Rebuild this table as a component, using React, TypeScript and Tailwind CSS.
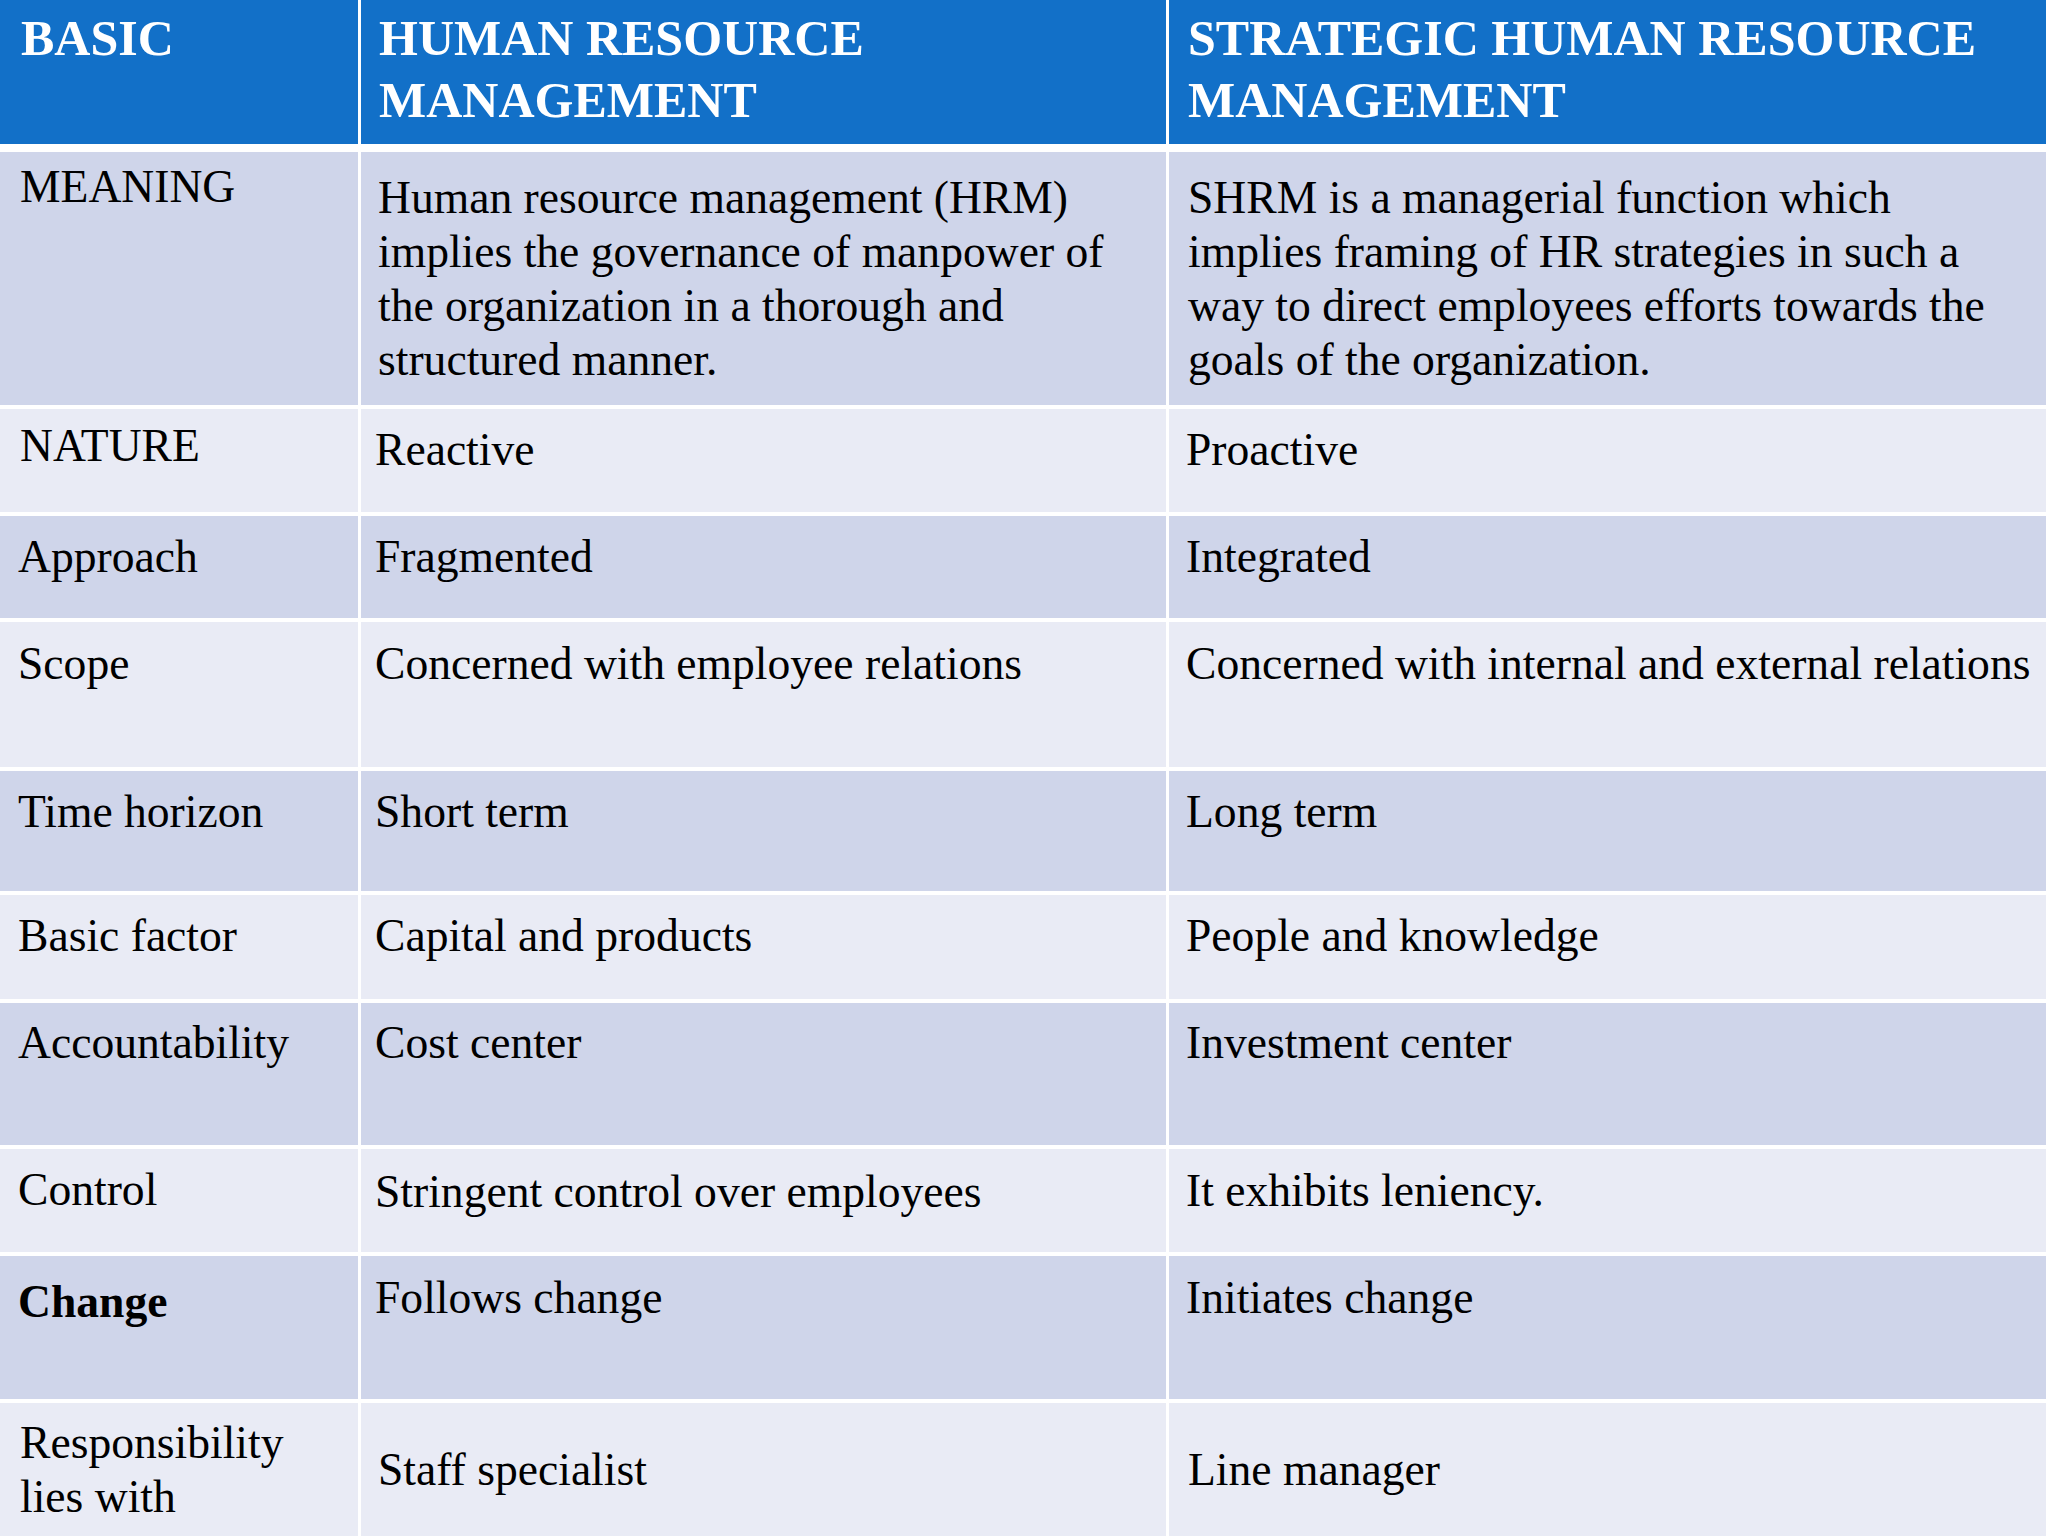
import React from "react";

type Row = {
  label: React.ReactNode;
  hrm: React.ReactNode;
  shrm: React.ReactNode;
  h: string;
  bg: string;
  x1: string;
  x2: string;
  x3: string;
  p1: string;
  p2: string;
  p3: string;
};

const DARK = "bg-[#cfd5ea]";
const LIGHT = "bg-[#e9ebf5]";

const rows: Row[] = [
  {
    label: "MEANING",
    hrm: (
      <>
        Human resource management (HRM)
        <br />
        implies the governance of manpower of
        <br />
        the organization in a thorough and
        <br />
        structured manner.
      </>
    ),
    shrm: (
      <>
        SHRM is a managerial function which
        <br />
        implies framing of HR strategies in such a
        <br />
        way to direct employees efforts towards the
        <br />
        goals of the organization.
      </>
    ),
    h: "h-[253px]",
    bg: DARK,
    x1: "pl-[20px]",
    x2: "pl-[17px]",
    x3: "pl-[19px]",
    p1: "pt-[8px] self-start",
    p2: "self-center",
    p3: "self-center",
  },
  {
    label: "NATURE",
    hrm: "Reactive",
    shrm: "Proactive",
    h: "h-[103px]",
    bg: LIGHT,
    x1: "pl-[20px]",
    x2: "pl-[14px]",
    x3: "pl-[17px]",
    p1: "pt-[10px]",
    p2: "pt-[14px]",
    p3: "pt-[14px]",
  },
  {
    label: "Approach",
    hrm: "Fragmented",
    shrm: "Integrated",
    h: "h-[102px]",
    bg: DARK,
    x1: "pl-[18px]",
    x2: "pl-[14px]",
    x3: "pl-[17px]",
    p1: "pt-[14px]",
    p2: "pt-[14px]",
    p3: "pt-[14px]",
  },
  {
    label: "Scope",
    hrm: "Concerned with employee relations",
    shrm: "Concerned with internal and external relations",
    h: "h-[145px]",
    bg: LIGHT,
    x1: "pl-[18px]",
    x2: "pl-[14px]",
    x3: "pl-[17px]",
    p1: "pt-[15px]",
    p2: "pt-[15px]",
    p3: "pt-[15px]",
  },
  {
    label: "Time horizon",
    hrm: "Short term",
    shrm: "Long term",
    h: "h-[120px]",
    bg: DARK,
    x1: "pl-[18px]",
    x2: "pl-[14px]",
    x3: "pl-[17px]",
    p1: "pt-[14px]",
    p2: "pt-[14px]",
    p3: "pt-[14px]",
  },
  {
    label: "Basic factor",
    hrm: "Capital and products",
    shrm: "People and knowledge",
    h: "h-[104px]",
    bg: LIGHT,
    x1: "pl-[18px]",
    x2: "pl-[14px]",
    x3: "pl-[17px]",
    p1: "pt-[14px]",
    p2: "pt-[14px]",
    p3: "pt-[14px]",
  },
  {
    label: "Accountability",
    hrm: "Cost center",
    shrm: "Investment center",
    h: "h-[142px]",
    bg: DARK,
    x1: "pl-[18px]",
    x2: "pl-[14px]",
    x3: "pl-[17px]",
    p1: "pt-[13px]",
    p2: "pt-[13px]",
    p3: "pt-[13px]",
  },
  {
    label: "Control",
    hrm: "Stringent control over employees",
    shrm: "It exhibits leniency.",
    h: "h-[103px]",
    bg: LIGHT,
    x1: "pl-[18px]",
    x2: "pl-[14px]",
    x3: "pl-[17px]",
    p1: "pt-[14px]",
    p2: "pt-[16px]",
    p3: "pt-[15px]",
  },
  {
    label: <span className="font-bold">Change</span>,
    hrm: "Follows change",
    shrm: "Initiates change",
    h: "h-[143px]",
    bg: DARK,
    x1: "pl-[18px]",
    x2: "pl-[14px]",
    x3: "pl-[17px]",
    p1: "pt-[19px]",
    p2: "pt-[15px]",
    p3: "pt-[15px]",
  },
  {
    label: (
      <>
        Responsibility
        <br />
        lies with
      </>
    ),
    hrm: "Staff specialist",
    shrm: "Line manager",
    h: "h-[133px]",
    bg: LIGHT,
    x1: "pl-[20px]",
    x2: "pl-[17px]",
    x3: "pl-[19px]",
    p1: "self-center",
    p2: "self-center",
    p3: "self-center",
  },
];

export default function App() {
  return (
    <div className="w-[2048px] h-[1536px] bg-white overflow-hidden font-['Liberation_Serif','Times_New_Roman',serif] text-black">
      <div className="flex flex-col gap-[4px]">
        {/* header */}
        <div className="grid grid-cols-[358px_805px_877px] gap-x-[3px] h-[144px] mb-[4px] text-white font-bold text-[50px] leading-[62px]">
          <div className="bg-[#1270c8] pl-[21px] pt-[7px]">BASIC</div>
          <div className="bg-[#1270c8] pl-[18px] pt-[7px]">
            HUMAN RESOURCE
            <br />
            MANAGEMENT
          </div>
          <div className="bg-[#1270c8] pl-[19px] pt-[7px]">
            STRATEGIC HUMAN RESOURCE
            <br />
            MANAGEMENT
          </div>
        </div>

        {rows.map((r, i) => (
          <div key={i} className={`grid grid-cols-[358px_805px_877px] gap-x-[3px] ${r.h} text-[45.6px] leading-[54px]`}>
            <div className={`${r.bg} flex ${r.x1}`}>
              <div className={r.p1}>{r.label}</div>
            </div>
            <div className={`${r.bg} flex ${r.x2}`}>
              <div className={r.p2}>{r.hrm}</div>
            </div>
            <div className={`${r.bg} flex ${r.x3} pr-[4px]`}>
              <div className={`${r.p3} whitespace-nowrap`}>{r.shrm}</div>
            </div>
          </div>
        ))}
      </div>
    </div>
  );
}
